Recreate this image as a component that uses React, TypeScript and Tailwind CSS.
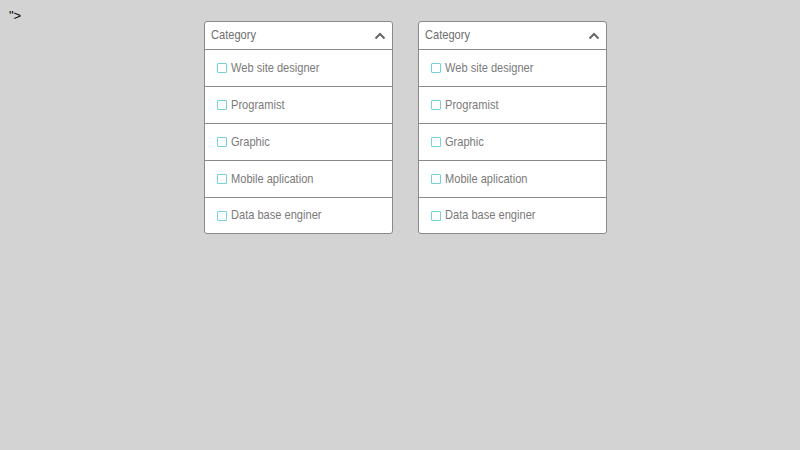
import { FC } from "react";

const ITEMS = [
  "Web site designer",
  "Programist",
  "Graphic",
  "Mobile aplication",
  "Data base enginer",
];

const ChevronUp = () => (
  <svg width="12" height="8" viewBox="0 0 12 8" fill="none">
    <path d="M1.5 6.5L6 2L10.5 6.5" stroke="#666" strokeWidth="2" />
  </svg>
);

// narrow face isn't installed, so squeeze Liberation Sans horizontally
const narrow = "inline-block origin-left scale-x-[0.82] whitespace-nowrap";

const CategoryBox: FC = () => {
  return (
    <div className="w-[189px] bg-white border border-[#8a8a8a] rounded-[3px] overflow-hidden">
      <div className="h-[28px] flex items-center justify-between pl-[6px] pr-[6px] border-b border-[#8a8a8a]">
        <span className={"text-[13.5px] text-[#6e6e6e] " + narrow}>Category</span>
        <ChevronUp />
      </div>
      {ITEMS.map((item, i) => (
        <div
          key={item}
          className={
            "flex items-center gap-[4px] pl-[12px]" +
            (i < ITEMS.length - 1 ? " h-[37px] border-b border-[#8a8a8a]" : " h-[35px]")
          }
        >
          <span className="shrink-0 w-[10px] h-[10px] border-[1.5px] border-[#72d3d8] rounded-[1px] bg-white" />
          <span className={"text-[13.5px] text-[#7a7a7a] " + narrow}>{item}</span>
        </div>
      ))}
    </div>
  );
};

export default function App() {
  return (
    <div className="w-[800px] h-[450px] bg-[#d3d3d3] relative font-['Liberation_Sans',sans-serif]">
      <div className="absolute left-[9px] top-[6px] text-[13px] text-black">
        "&gt;
      </div>
      <div className="flex gap-[25px] pl-[204px] pt-[21px]">
        <CategoryBox />
        <CategoryBox />
      </div>
    </div>
  );
}
